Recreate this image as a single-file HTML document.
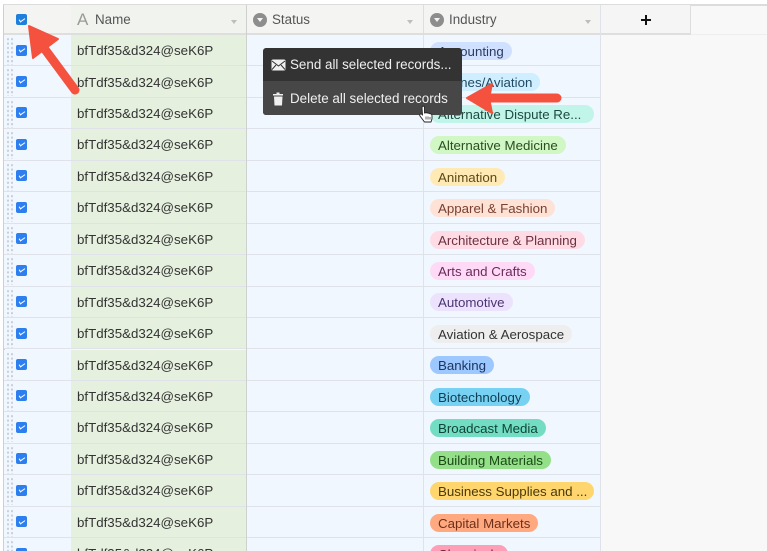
<!DOCTYPE html>
<html><head><meta charset="utf-8"><style>
html,body{margin:0;padding:0;width:767px;height:551px;overflow:hidden}
#w{position:relative;width:767px;height:551px;overflow:hidden;background:#f8f8f8;font-family:"Liberation Sans",sans-serif;color:#333;filter:blur(.25px)}
.a{position:absolute}
.r{position:absolute;left:4px;width:597px;height:31.45px;border-bottom:1px solid #dfe2e8;box-sizing:border-box;background:#f0f7ff}
.g{position:absolute;left:67px;top:0;width:175px;height:100%;background:#e5f0de}
.ck{position:absolute;left:12px;top:9.5px;width:11px;height:11px;border-radius:2px;background:#2d7ff0}
.ck:after{content:"";position:absolute;left:3px;top:3.5px;width:5px;height:2px;border-left:1.3px solid #fff;border-bottom:1.3px solid #fff;transform:rotate(-35deg)}
.dots{position:absolute;left:2px;top:2px;width:8px;height:28px;background-image:radial-gradient(circle,#c8ced8 1px,transparent 1.2px);background-size:4px 4.4px}
.t{position:absolute;left:73px;top:8px;font-size:13.3px;line-height:16px;color:#333;white-space:nowrap}
.p{position:absolute;left:426px;top:6.5px;height:18px;line-height:19px;border-radius:9px;padding:0 8px;font-size:13.3px;white-space:nowrap;box-sizing:border-box;overflow:hidden}
.h{position:absolute;top:5px;height:30px;background:#f4f5f3;border-bottom:2px solid #dedede;box-sizing:border-box;font-size:13.4px;color:#555;line-height:30px}
.d{position:absolute;width:14px;height:14px;border-radius:50%;background:#8d8d8d;top:8px}
.d:after{content:"";position:absolute;left:3.5px;top:5px;border-left:3.5px solid transparent;border-right:3.5px solid transparent;border-top:4.5px solid #f4f5f3}
.c{position:absolute;top:15px;border-left:3.5px solid transparent;border-right:3.5px solid transparent;border-top:4px solid #bdbdbd}
</style></head><body><div id="w">
<div class="a" style="left:0;top:0;width:767px;height:4px;background:#fff"></div>
<div class="a" style="left:0;top:4px;width:767px;height:1.5px;background:#dcdcdc"></div>
<div class="a" style="left:691px;top:34px;width:76px;height:1px;background:#eee"></div>
<div class="a" style="left:0;top:0;width:3px;height:551px;background:#fff"></div>
<div class="a" style="left:3px;top:5px;width:1.5px;height:546px;background:#cfd0ce"></div>

<div class="r" style="top:35px"><div class="g"></div><div class="dots"></div><div class="ck"></div></div>
<div class="r" style="top:66.45px"><div class="g"></div><div class="dots"></div><div class="ck"></div></div>
<div class="r" style="top:97.9px"><div class="g"></div><div class="dots"></div><div class="ck"></div></div>
<div class="r" style="top:129.35px"><div class="g"></div><div class="dots"></div><div class="ck"></div><div class="t">bfTdf35&amp;d324@seK6P</div></div>
<div class="r" style="top:160.8px"><div class="g"></div><div class="dots"></div><div class="ck"></div><div class="t">bfTdf35&amp;d324@seK6P</div></div>
<div class="r" style="top:192.25px"><div class="g"></div><div class="dots"></div><div class="ck"></div><div class="t">bfTdf35&amp;d324@seK6P</div></div>
<div class="r" style="top:223.7px"><div class="g"></div><div class="dots"></div><div class="ck"></div><div class="t">bfTdf35&amp;d324@seK6P</div></div>
<div class="r" style="top:255.15px"><div class="g"></div><div class="dots"></div><div class="ck"></div><div class="t">bfTdf35&amp;d324@seK6P</div></div>
<div class="r" style="top:286.6px"><div class="g"></div><div class="dots"></div><div class="ck"></div><div class="t">bfTdf35&amp;d324@seK6P</div></div>
<div class="r" style="top:318.05px"><div class="g"></div><div class="dots"></div><div class="ck"></div><div class="t">bfTdf35&amp;d324@seK6P</div></div>
<div class="r" style="top:349.5px"><div class="g"></div><div class="dots"></div><div class="ck"></div><div class="t">bfTdf35&amp;d324@seK6P</div></div>
<div class="r" style="top:380.95px"><div class="g"></div><div class="dots"></div><div class="ck"></div><div class="t">bfTdf35&amp;d324@seK6P</div></div>
<div class="r" style="top:412.4px"><div class="g"></div><div class="dots"></div><div class="ck"></div><div class="t">bfTdf35&amp;d324@seK6P</div></div>
<div class="r" style="top:443.85px"><div class="g"></div><div class="dots"></div><div class="ck"></div><div class="t">bfTdf35&amp;d324@seK6P</div></div>
<div class="r" style="top:475.3px"><div class="g"></div><div class="dots"></div><div class="ck"></div><div class="t">bfTdf35&amp;d324@seK6P</div></div>
<div class="r" style="top:506.75px"><div class="g"></div><div class="dots"></div><div class="ck"></div><div class="t">bfTdf35&amp;d324@seK6P</div></div>
<div class="r" style="top:538.2px"><div class="g"></div><div class="dots"></div><div class="ck"></div><div class="t">bfTdf35&amp;d324@seK6P</div></div>

<div class="a t" style="left:77px;top:43px">bfTdf35&amp;d324@seK6P</div>
<div class="a t" style="left:77px;top:74.5px">bfTdf35&amp;d324@seK6P</div>
<div class="a t" style="left:77px;top:106px">bfTdf35&amp;d324@seK6P</div>

<div class="a" style="left:246px;top:5px;width:1.2px;height:546px;background:#cfd1cf"></div>
<div class="a" style="left:423px;top:35px;width:1px;height:516px;background:#dfe2e8"></div>
<div class="a" style="left:600px;top:5px;width:1px;height:546px;background:#dfe2e8"></div>

<div class="h" style="left:4px;width:67px"></div>
<div class="a" style="left:16px;top:14px;width:11px;height:11px;border-radius:2px;background:#1f7fdc"><div style="position:absolute;left:3px;top:3.5px;width:5px;height:2px;border-left:1.3px solid #fff;border-bottom:1.3px solid #fff;transform:rotate(-35deg)"></div></div>
<div class="h" style="left:71px;width:175px;background:#f0f3ee"><span class="a" style="left:6px;top:0;font-size:17px;color:#9a9a9a">A</span><span class="a" style="left:24px;top:0">Name</span><div class="c" style="left:160px"></div></div>
<div class="h" style="left:247px;width:176px"><div class="d" style="left:6px"></div><span class="a" style="left:25px;top:0">Status</span><div class="c" style="left:160px"></div></div>
<div class="a" style="left:423px;top:5px;width:1px;height:30px;background:#dedede"></div>
<div class="h" style="left:424px;width:176px"><div class="d" style="left:6px"></div><span class="a" style="left:25px;top:0">Industry</span><div class="c" style="left:161px"></div></div>
<div class="h" style="left:601px;width:90px;border-right:1px solid #dedede;background:#f5f5f5"></div>
<div class="a" style="left:641px;top:19px;width:10px;height:2px;background:#111"></div>
<div class="a" style="left:645px;top:15px;width:2px;height:10px;background:#111"></div>

<div class="p" style="top:41.5px;left:430px;width:82px;background:#d0e0ff;color:#2c3a66">Accounting</div>
<div class="p" style="top:73px;left:430px;width:110px;background:#cfeeff;color:#1f4a63">Airlines/Aviation</div>
<div class="p" style="top:104.5px;left:430px;width:164px;background:#c2f5e9;color:#1c4a42">Alternative Dispute Re...</div>
<div class="p" style="top:136px;left:430px;background:#d1f7c4;color:#2a4f20">Alternative Medicine</div>
<div class="p" style="top:167.5px;left:430px;background:#ffeab6;color:#5c4a14">Animation</div>
<div class="p" style="top:199px;left:430px;background:#fee2d5;color:#7a4030">Apparel &amp; Fashion</div>
<div class="p" style="top:230.5px;left:430px;background:#ffdce5;color:#6e3040">Architecture &amp; Planning</div>
<div class="p" style="top:262px;left:430px;background:#ffdaf6;color:#6b2c5c">Arts and Crafts</div>
<div class="p" style="top:293px;left:430px;background:#ede2fe;color:#4a3570">Automotive</div>
<div class="p" style="top:324.5px;left:430px;background:#eeeeee;color:#333">Aviation &amp; Aerospace</div>
<div class="p" style="top:356px;left:430px;background:#9cc7ff;color:#1c3560">Banking</div>
<div class="p" style="top:387.5px;left:430px;background:#77d1f3;color:#0f3d52">Biotechnology</div>
<div class="p" style="top:419px;left:430px;background:#72ddc3;color:#0f4436">Broadcast Media</div>
<div class="p" style="top:450.5px;left:430px;background:#93e088;color:#1c4717">Building Materials</div>
<div class="p" style="top:482px;left:430px;width:164px;background:#ffd66e;color:#4a3808">Business Supplies and ...</div>
<div class="p" style="top:513.5px;left:430px;background:#ffa981;color:#6e2f18">Capital Markets</div>
<div class="p" style="top:545px;left:430px;background:#ff9eb7;color:#6b1c32">Chemicals</div>

<div class="a" style="left:263px;top:48px;width:199px;height:67px;border-radius:3px;background:#333;overflow:hidden;color:#f0f0f0;font-size:13.4px">
<div class="a" style="left:0;top:33px;width:199px;height:34px;background:#474747"></div>
<div class="a" style="left:27px;top:9px;white-space:nowrap;line-height:16px">Send all selected records...</div>
<div class="a" style="left:27px;top:43px;white-space:nowrap;line-height:16px">Delete all selected records</div>
<svg class="a" style="left:8px;top:11px" width="15" height="12" viewBox="0 0 15 12"><rect x="0.5" y="0.5" width="14" height="11" rx="1.5" fill="#f0f0f0"/><path d="M1 2l6.5 5L14 2M1 10.5l4-4.500M14 10.5l-4-4.500" stroke="#333" fill="none"/></svg>
<svg class="a" style="left:10px;top:43px" width="11" height="15" viewBox="0 0 11 15"><path d="M0 3h10v1.500H0zM3.500 1.500h3V3h-3zM1 5.500h8.500L9 14.500H1.500z" fill="#f0f0f0"/></svg>
</div>

<svg class="a" style="left:0;top:0" width="767" height="551" viewBox="0 0 767 551">
<path d="M75 90L41 44" stroke="#f4513f" stroke-width="9" stroke-linecap="round" fill="none"/>
<path d="M29 26L58 39L33 58Z" fill="#f4513f" stroke="#f4513f" stroke-width="2" stroke-linejoin="round"/>
<path d="M475 98H557" stroke="#f4513f" stroke-width="9" stroke-linecap="round" fill="none"/>
<path d="M467 98L492 84L489 98L492 113Z" fill="#f4513f" stroke="#f4513f" stroke-width="2" stroke-linejoin="round"/>
<path d="M422 107.500c0-1.800 2.500-1.800 2.500 0v5.500l1.500-.3 1.800.3 1.700.4 1.500.6c.8.400 1 1 1 1.800v3l-1 3.200h-6.500l-4.500-6c-1-1.500.8-2.800 2-1.500l.5.6z" fill="#fff" stroke="#222" stroke-width="0.9" stroke-linejoin="round"/>
<path d="M426 116.500v3M428 116.500v3M430 117v2.500" stroke="#222" stroke-width=".7" fill="none"/>
</svg>
</div></body></html>
